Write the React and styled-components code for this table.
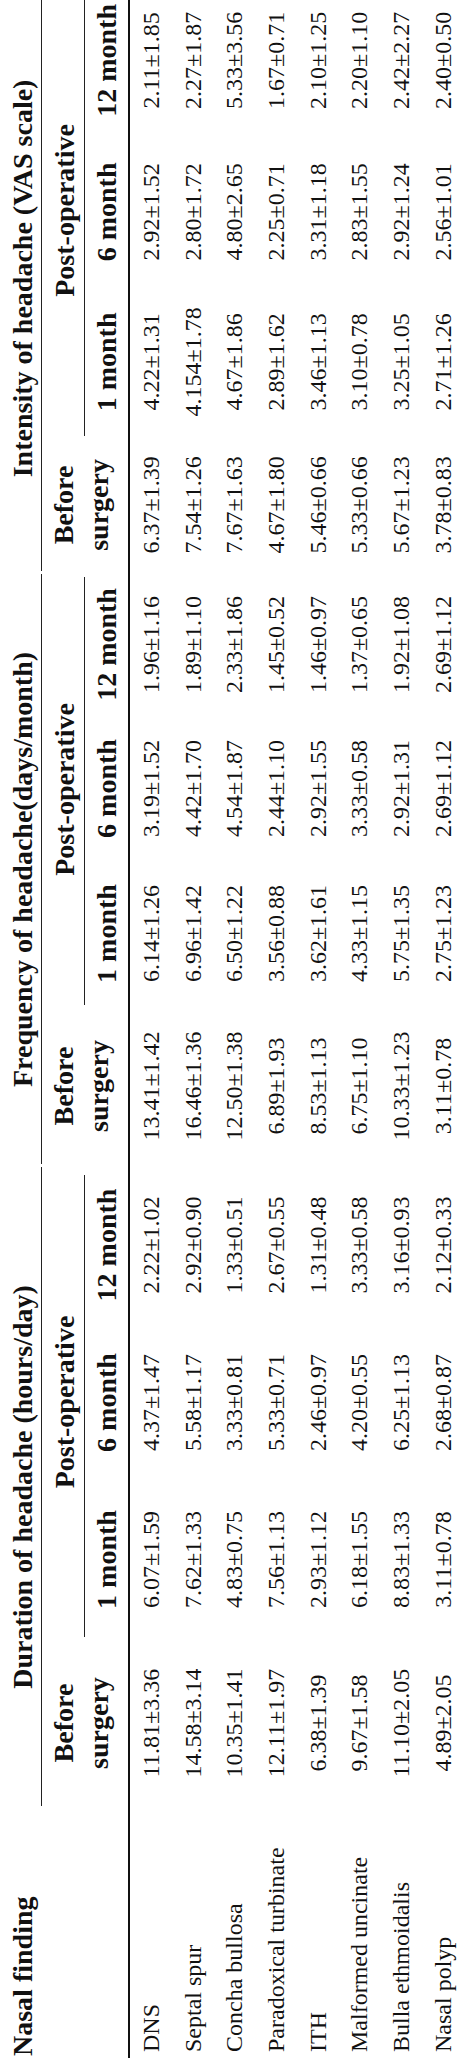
import React from "react";
import styled, { createGlobalStyle } from "styled-components";

// the table is laid out landscape, then turned a quarter to the left
const TABLE_W = 2074;

const widths = [250, 170, 157, 157, 158, 160, 145, 145, 143, 136, 150, 150, 153];

const groups = [
    { title: "Duration of headache (hours/day)", rule: [1, 9] },
    { title: "Frequency of headache(days/month)", rule: [1, 4] },
    { title: "Intensity of headache (VAS scale)", rule: [1, 1] },
];

const rows = [
    ["DNS", "11.81±3.36", "6.07±1.59", "4.37±1.47", "2.22±1.02", "13.41±1.42", "6.14±1.26", "3.19±1.52", "1.96±1.16", "6.37±1.39", "4.22±1.31", "2.92±1.52", "2.11±1.85"],
    ["Septal spur", "14.58±3.14", "7.62±1.33", "5.58±1.17", "2.92±0.90", "16.46±1.36", "6.96±1.42", "4.42±1.70", "1.89±1.10", "7.54±1.26", "4.154±1.78", "2.80±1.72", "2.27±1.87"],
    ["Concha bullosa", "10.35±1.41", "4.83±0.75", "3.33±0.81", "1.33±0.51", "12.50±1.38", "6.50±1.22", "4.54±1.87", "2.33±1.86", "7.67±1.63", "4.67±1.86", "4.80±2.65", "5.33±3.56"],
    ["Paradoxical turbinate", "12.11±1.97", "7.56±1.13", "5.33±0.71", "2.67±0.55", "6.89±1.93", "3.56±0.88", "2.44±1.10", "1.45±0.52", "4.67±1.80", "2.89±1.62", "2.25±0.71", "1.67±0.71"],
    ["ITH", "6.38±1.39", "2.93±1.12", "2.46±0.97", "1.31±0.48", "8.53±1.13", "3.62±1.61", "2.92±1.55", "1.46±0.97", "5.46±0.66", "3.46±1.13", "3.31±1.18", "2.10±1.25"],
    ["Malformed uncinate", "9.67±1.58", "6.18±1.55", "4.20±0.55", "3.33±0.58", "6.75±1.10", "4.33±1.15", "3.33±0.58", "1.37±0.65", "5.33±0.66", "3.10±0.78", "2.83±1.55", "2.20±1.10"],
    ["Bulla ethmoidalis", "11.10±2.05", "8.83±1.33", "6.25±1.13", "3.16±0.93", "10.33±1.23", "5.75±1.35", "2.92±1.31", "1.92±1.08", "5.67±1.23", "3.25±1.05", "2.92±1.24", "2.42±2.27"],
    ["Nasal polyp", "4.89±2.05", "3.11±0.78", "2.68±0.87", "2.12±0.33", "3.11±0.78", "2.75±1.23", "2.69±1.12", "2.69±1.12", "3.78±0.83", "2.71±1.26", "2.56±1.01", "2.40±0.50"],
];

const App = () => {
    return (
        <Page>
            <GlobalStyle />
            <Turned>
                <Table>
                    <colgroup>
                        {widths.map((w, i) => <Col key={i} $w={w} />)}
                    </colgroup>
                    <thead>
                        <TitleRow>
                            <HeadCell rowSpan={3} $align="left" $valign="top" $pt={5} $pl={2} $last>
                                Nasal finding
                            </HeadCell>
                            {groups.map(g => (
                                <HeadCell key={g.title} colSpan={4} $pb={2} $rule={[1.5, 1.5]}>
                                    {g.title}
                                </HeadCell>
                            ))}
                        </TitleRow>
                        <SubRow>
                            {groups.map(g => (
                                <React.Fragment key={g.title}>
                                    <HeadCell rowSpan={2} $pb={12} $last>
                                        Before<br />surgery
                                    </HeadCell>
                                    <HeadCell colSpan={3} $pb={3} $rule={g.rule}>
                                        Post-operative
                                    </HeadCell>
                                </React.Fragment>
                            ))}
                        </SubRow>
                        <MonthRow>
                            {groups.map(g => (
                                <React.Fragment key={g.title}>
                                    <HeadCell $pb={4} $last>1 month</HeadCell>
                                    <HeadCell $pb={4} $last>6 month</HeadCell>
                                    <HeadCell $pb={4} $last>12 month</HeadCell>
                                </React.Fragment>
                            ))}
                        </MonthRow>
                    </thead>
                    <tbody>
                        {rows.map(r => (
                            <DataRow key={r[0]}>
                                {r.map((v, i) => (
                                    <Cell key={i} $name={i === 0}>{v}</Cell>
                                ))}
                            </DataRow>
                        ))}
                    </tbody>
                </Table>
            </Turned>
        </Page>
    );
};

//styled components
const GlobalStyle = createGlobalStyle`
    html, body {
        margin: 0;
        padding: 0;
        background: #fff;
    }
    body {
        font-family: "Liberation Serif", "Times New Roman", serif;
        color: #111;
    }
`;

const Page = styled.div`
    width: 458px;
    height: 2058px;
    overflow: hidden;
    background: #fff;
`;

const Turned = styled.div`
    width: 2058px;
    height: 458px;
    transform-origin: 0 0;
    transform: translateY(2058px) rotate(-90deg);
`;

const Table = styled.table`
    width: ${TABLE_W}px;
    table-layout: fixed;
    border-collapse: separate;
    border-spacing: 0;
    font-family: "Liberation Serif", "Times New Roman", serif;
    color: #111;
`;

const Col = styled.col`
    width: ${p => p.$w}px;
`;

const TitleRow = styled.tr`
    height: 42px;
`;

const SubRow = styled.tr`
    height: 43px;
`;

const MonthRow = styled.tr`
    height: 45px;
`;

const HeadCell = styled.th`
    font-size: 28px;
    font-weight: bold;
    line-height: 35px;
    white-space: nowrap;
    padding: ${p => p.$pt || 0}px 0 ${p => p.$pb || 0}px ${p => p.$pl || 0}px;
    text-align: ${p => p.$align || "center"};
    vertical-align: ${p => p.$valign || "bottom"};
    border-bottom: ${p => (p.$last ? "2px solid #111" : "none")};
    background-image: ${p => (p.$rule ? "linear-gradient(#222, #222)" : "none")};
    background-repeat: no-repeat;
    background-size: ${p => (p.$rule ? `calc(100% - ${p.$rule[0] + p.$rule[1]}px) 1px` : "auto")};
    background-position: ${p => (p.$rule ? `${p.$rule[0]}px 100%` : "0 0")};
`;

const DataRow = styled.tr`
    height: 41.7px;
`;

const Cell = styled.td`
    font-size: 24px;
    line-height: 28px;
    white-space: nowrap;
    padding: 0 0 0 ${p => (p.$name ? 6 : 0)}px;
    text-align: ${p => (p.$name ? "left" : "center")};
    vertical-align: middle;
`;

export default App;
